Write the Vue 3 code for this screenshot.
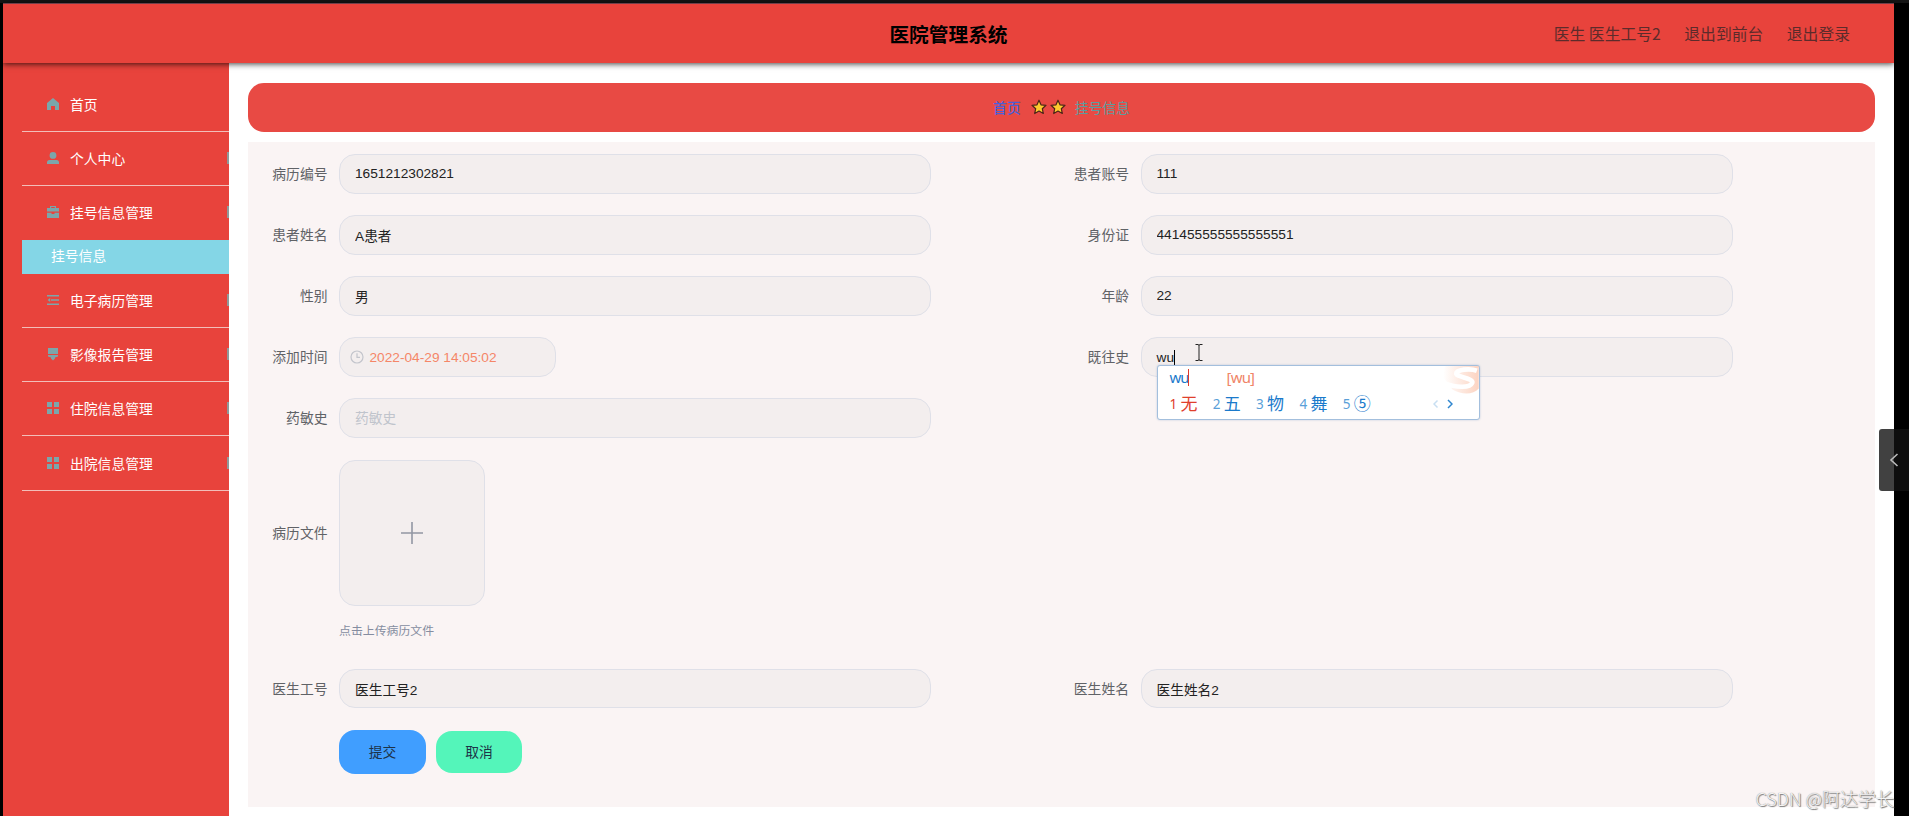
<template>
  <div class="screen">
    <div class="app">
      <header class="navbar">
        <div class="title">医院管理系统</div>
        <div class="right-menu">
          <span class="user">医生 医生工号2</span>
          <span class="front">退出到前台</span>
          <span class="logout">退出登录</span>
        </div>
      </header>

      <div class="container">
        <aside class="sidebar">
          <ul class="menu">
            <li v-for="item in menus" :key="item.name" class="menu-group">
              <div class="menu-item" :class="{ opened: item.child }">
                <svg class="menu-icon" viewBox="0 0 12 12">
                  <path :d="icons[item.icon]" fill-rule="evenodd" />
                </svg>
                <span>{{ item.name }}</span>
                <i v-if="item.arrow" class="menu-arrow"></i>
              </div>
              <div v-if="item.child" class="menu-child">{{ item.child }}</div>
            </li>
          </ul>
        </aside>

        <main class="main">
          <div class="breadcrumb">
            <span class="crumb-home">首页</span>
            <span class="stars">
              <svg v-for="n in 2" :key="n" viewBox="0 0 16 16">
                <path d="M8 1.2 10 5.8 15 6.3 11.3 9.7 12.3 14.5 8 12.1 3.7 14.5 4.7 9.7 1 6.3 6 5.8Z" />
              </svg>
            </span>
            <span class="crumb-current">挂号信息</span>
          </div>

          <form class="detail-form" @submit.prevent>
            <div class="form-grid">
              <div class="form-item">
                <label>病历编号</label>
                <input v-model="form.bingli" class="field" />
              </div>
              <div class="form-item">
                <label>患者账号</label>
                <input v-model="form.zhanghao" class="field" />
              </div>
              <div class="form-item">
                <label>患者姓名</label>
                <input v-model="form.xingming" class="field" />
              </div>
              <div class="form-item">
                <label>身份证</label>
                <input v-model="form.shenfenzheng" class="field" />
              </div>
              <div class="form-item">
                <label>性别</label>
                <input v-model="form.xingbie" class="field" />
              </div>
              <div class="form-item">
                <label>年龄</label>
                <input v-model="form.nianling" class="field" />
              </div>
              <div class="form-item">
                <label>添加时间</label>
                <div class="field date">
                  <svg class="clock" viewBox="0 0 14 14">
                    <circle cx="7" cy="7" r="6" />
                    <path d="M7 3.2V7.4H10" />
                  </svg>
                  <span>{{ form.shijian }}</span>
                </div>
              </div>
              <div class="form-item">
                <label>既往史</label>
                <div class="field typing">
                  <span>{{ form.jiwangshi }}</span><i class="caret"></i>
                  <svg class="ibeam" viewBox="0 0 8 17">
                    <path d="M.5 .5H3L4 1.2 5 .5H7.5M4 1V16M.5 16.5H3L4 15.8 5 16.5H7.5" />
                  </svg>
                  <div class="ime">
                    <svg class="ime-logo" viewBox="0 0 40 32">
                      <defs>
                        <linearGradient id="imeGlow" x1="0" x2="1">
                          <stop offset="0" stop-color="#fff" />
                          <stop offset="1" stop-color="#fbc5ad" />
                        </linearGradient>
                      </defs>
                      <path d="M4 0H40V24C34 31 22 31 12 25L2 12Z" fill="url(#imeGlow)" opacity=".75" />
                      <path d="M38 5C30 2 16 4 16 8S35 13 33 18 17 24 2 18" fill="none" stroke="#fff" stroke-width="5" />
                    </svg>
                    <div class="ime-input">
                      <span class="ime-typed">wu</span>
                      <i class="ime-caret"></i>
                      <span class="ime-pinyin">[wu]</span>
                    </div>
                    <div class="ime-words">
                      <span v-for="(word, i) in words" :key="word" class="ime-word">
                        <small>{{ i + 1 }}</small><b>{{ word }}</b>
                      </span>
                      <svg class="ime-page" viewBox="0 0 20 10">
                        <path class="prev" d="M4.5 1.5 1 5 4.5 8.5" />
                        <path class="next" d="M15 1 19 5 15 9" />
                      </svg>
                    </div>
                  </div>
                </div>
              </div>
              <div class="form-item">
                <label>药敏史</label>
                <input v-model="form.yaominshi" class="field" placeholder="药敏史" />
              </div>
            </div>

            <div class="form-item upload-item">
              <label>病历文件</label>
              <div class="upload">
                <svg viewBox="0 0 24 24"><path d="M12 1V23M1 12H23" /></svg>
              </div>
            </div>
            <div class="upload-tip">点击上传病历文件</div>

            <div class="form-grid">
              <div class="form-item">
                <label>医生工号</label>
                <input v-model="form.gonghao" class="field" />
              </div>
              <div class="form-item">
                <label>医生姓名</label>
                <input v-model="form.yisheng" class="field" />
              </div>
            </div>

            <div class="btn-group">
              <button class="btn-submit">提交</button>
              <button class="btn-cancel" type="button">取消</button>
            </div>
          </form>
        </main>
      </div>
    </div>

    <div class="side-tab">
      <svg viewBox="0 0 10 14"><path d="M8.5 1 2 7 8.5 13" /></svg>
    </div>
    <div class="watermark">CSDN @阿达学长</div>
  </div>
</template>

<script setup>
import { reactive } from 'vue';

const form = reactive({
  bingli: '1651212302821',
  zhanghao: '111',
  xingming: 'A患者',
  shenfenzheng: '441455555555555551',
  xingbie: '男',
  nianling: '22',
  shijian: '2022-04-29 14:05:02',
  jiwangshi: 'wu',
  yaominshi: '',
  gonghao: '医生工号2',
  yisheng: '医生姓名2'
});

const words = ['无', '五', '物', '舞', '⑤'];

const menus = [
  { name: '首页', icon: 'home' },
  { name: '个人中心', icon: 'user', arrow: true },
  { name: '挂号信息管理', icon: 'bag', arrow: true, child: '挂号信息' },
  { name: '电子病历管理', icon: 'fold', arrow: true },
  { name: '影像报告管理', icon: 'brush', arrow: true },
  { name: '住院信息管理', icon: 'grid', arrow: true },
  { name: '出院信息管理', icon: 'grid', arrow: true }
];

const icons = {
  home: 'M6 0 12 5V12H8V8H4V12H0V5Z',
  user: 'M6 0A3.4 3.4 0 0 1 6 6.8 3.4 3.4 0 0 1 6 0ZM0 12V10.5Q0 8 2.5 8H9.5Q12 8 12 10.5V12Z',
  bag: 'M3 2V0H9V2H12V5.6H0V2ZM4.2 2H7.8V1.1H4.2ZM0 6.8H4.5V8H7.5V6.8H12V12H0Z',
  fold: 'M0 1H12V2.6H0ZM4 5.2H12V6.8H4ZM0 9.4H12V11H0ZM3.2 3.9V8.1L.6 6Z',
  brush: 'M1 0H11V6H1ZM1 7H11V8.5L8 9.5V10.5L6 12.5 4 10.5V9.5L1 8.5Z',
  grid: 'M0 0H5V5H0ZM7 0H12V5H7ZM0 7H5V12H0ZM7 7H12V12H7Z'
};
</script>

<style>
body {
  margin: 0;
  background: #000;
}
</style>

<style scoped>
.screen {
  position: relative;
  box-sizing: border-box;
  width: 1909px;
  height: 816px;
  padding: 3px 15px 0 3px;
  overflow: hidden;
  background: linear-gradient(#151515 3px, #000 3px);
  font-family: "Liberation Sans", "Noto Sans CJK SC", sans-serif;
  font-size: 13.8px;
}

.app {
  display: flex;
  flex-direction: column;
  height: 813px;
  background: #fff;
}

.navbar {
  position: relative;
  z-index: 2;
  box-sizing: border-box;
  flex: none;
  display: grid;
  grid-template-columns: 1fr auto 1fr;
  align-items: center;
  height: 60px;
  padding: 0 44px 1px;
  border-top: 1px solid #70404a;
  background: #e8433c;
  box-shadow: 0 1px 6px rgba(0, 0, 0, .75);
  font-family: "Noto Sans CJK SC", sans-serif;
}

.title {
  grid-column: 2;
  font-size: 19.7px;
  font-weight: 700;
  color: #000;
}

.right-menu {
  display: flex;
  justify-content: flex-end;
  gap: 23.5px;
  font-size: 15.8px;
  color: #5c2b2b;
}

.container {
  flex: 1;
  display: flex;
  min-height: 0;
}

.sidebar {
  box-sizing: border-box;
  flex: none;
  width: 226px;
  padding: 15px 0 0 19px;
  background: #e8433c;
}

.menu {
  margin: 0;
  padding: 0;
  list-style: none;
}

.menu-item {
  box-sizing: border-box;
  display: flex;
  align-items: center;
  height: 54.2px;
  padding: 0 0 1px 25px;
  border-bottom: 1px solid #f2beb9;
  color: #fff;
}

.menu-item.opened {
  height: 53.5px;
  border-bottom-color: transparent;
}

.menu-icon {
  width: 12px;
  height: 12px;
  margin-right: 11px;
  fill: #7ba6ab;
  overflow: visible;
}

.menu-arrow {
  width: 2px;
  height: 12px;
  margin-left: auto;
  background: #8f9999;
}

.menu-child {
  height: 34px;
  padding-left: 29px;
  line-height: 34px;
  background: #84d6e6;
  color: #fff;
}

.main {
  flex: 1;
  padding: 20px 19px 9px;
}

.breadcrumb {
  box-sizing: border-box;
  display: flex;
  align-items: center;
  justify-content: center;
  height: 49px;
  padding-bottom: 2px;
  border-radius: 16px;
  background: #e84a44;
}

.crumb-home {
  font-weight: 500;
  color: #4b5fd6;
}

.stars {
  display: flex;
  gap: 3px;
  margin: 0 9px 0 10px;
}

.stars svg {
  width: 16px;
  height: 16px;
  fill: #fdc92f;
  stroke: #4c2417;
  stroke-width: 1.2;
  stroke-linejoin: round;
}

.crumb-current {
  color: #5c9d9f;
}

.detail-form {
  box-sizing: border-box;
  height: 665px;
  margin-top: 10px;
  padding: 12px 0 0;
  background: #faf4f4;
}

.form-grid {
  display: grid;
  grid-template-columns: 801.5px 801.5px;
  row-gap: 21.6px;
}

.form-item {
  display: flex;
  align-items: center;
}

.form-item label {
  width: 79.5px;
  margin-right: 11.5px;
  padding-bottom: 2px;
  text-align: right;
  color: #606266;
}

.field {
  position: relative;
  box-sizing: border-box;
  width: 592px;
  height: 39.5px;
  padding: 0 15px;
  border: 1px solid #dfe0e8;
  border-radius: 16px;
  outline: none;
  background: #f3eeee;
  font-family: inherit;
  font-size: 13.7px;
  color: #222;
}

.field::placeholder {
  color: #c0c4cc;
}

.date {
  display: flex;
  align-items: center;
  width: 217px;
  padding-left: 10px;
  color: #f58668;
}

.clock {
  width: 14px;
  height: 14px;
  margin-right: 5.5px;
  fill: none;
  stroke: #c3c5cc;
  stroke-width: 1.2;
}

.typing {
  display: flex;
  align-items: center;
}

.caret {
  width: 1px;
  height: 15px;
  background: #000;
}

.ibeam {
  position: absolute;
  top: 6px;
  left: 53px;
  width: 8px;
  height: 17px;
  fill: none;
  stroke: #222;
}

/* 输入法候选框 */
.ime {
  position: absolute;
  z-index: 3;
  top: 27px;
  left: 15px;
  box-sizing: border-box;
  width: 323px;
  height: 55px;
  padding: 0 11px 0 12px;
  border: 1px solid #a3bfdd;
  border-radius: 3px;
  background: #fff;
  box-shadow: 0 0 2px rgba(90, 130, 180, .4);
  font-family: "Noto Sans", "Noto Sans CJK SC", sans-serif;
}

.ime-logo {
  position: absolute;
  top: 0;
  right: 0;
  width: 38px;
  height: 30px;
}

.ime-input {
  display: flex;
  align-items: center;
  height: 22px;
  font-size: 15px;
  line-height: 16px;
}

.ime-typed {
  width: 18px;
  letter-spacing: -1px;
  color: #1b7acb;
}

.ime-caret {
  width: 1px;
  height: 17px;
  background: #e03a28;
}

.ime-pinyin {
  margin-left: 38px;
  letter-spacing: -.8px;
  color: #f08568;
}

.ime-words {
  display: flex;
  align-items: center;
  height: 31px;
}

.ime-word {
  display: flex;
  align-items: center;
  width: 43.3px;
  color: #1b7acb;
}

.ime-word small {
  width: 11px;
  font-size: 13.5px;
  color: #5a9fd8;
}

.ime-word b {
  font-size: 17px;
  font-weight: 400;
  line-height: 24px;
}

.ime-word:first-child,
.ime-word:first-child small {
  color: #e0402c;
}

.ime-page {
  width: 20px;
  height: 10px;
  margin-left: 47px;
  fill: none;
  stroke-width: 1.5;
}

.prev {
  stroke: #c8dff2;
}

.next {
  stroke: #2f86cf;
}

.upload-item {
  margin-top: 22px;
}

.upload {
  box-sizing: border-box;
  display: flex;
  align-items: center;
  justify-content: center;
  width: 146px;
  height: 146px;
  border: 1px solid #dfe0e8;
  border-radius: 16px;
  background: #f3eeee;
}

.upload svg {
  width: 24px;
  height: 24px;
  fill: none;
  stroke: #9297a3;
  stroke-width: 1.6;
}

.upload-tip {
  height: 24px;
  margin: 13px 0 26px 91px;
  font-size: 11.9px;
  line-height: 24px;
  color: #858da0;
}

.btn-group {
  display: flex;
  align-items: center;
  gap: 10px;
  margin: 21.3px 0 0 91px;
}

.btn-group button {
  width: 87px;
  height: 44px;
  padding: 0 0 1px;
  border: none;
  border-radius: 16px;
  font-family: inherit;
  font-size: 13.8px;
  color: #1d3348;
}

.btn-group .btn-submit {
  background: #409eff;
}

.btn-group .btn-cancel {
  width: 86px;
  height: 42px;
  background: #54f5ba;
}

.side-tab {
  position: absolute;
  z-index: 4;
  top: 429px;
  right: 0;
  display: flex;
  align-items: center;
  justify-content: center;
  width: 30px;
  height: 62px;
  border-radius: 3px 0 0 3px;
  background: rgba(17, 17, 17, .8);
}

.side-tab svg {
  width: 10px;
  height: 14px;
  fill: none;
  stroke: #bbb;
  stroke-width: 1.6;
}

.watermark {
  position: absolute;
  right: 15px;
  bottom: 5px;
  font-family: "Noto Sans CJK SC", sans-serif;
  font-size: 18px;
  font-weight: 300;
  line-height: 26px;
  color: #f4f4f4;
  text-shadow: 1px 1px 1px #777, 0 0 1px #777;
}
</style>
